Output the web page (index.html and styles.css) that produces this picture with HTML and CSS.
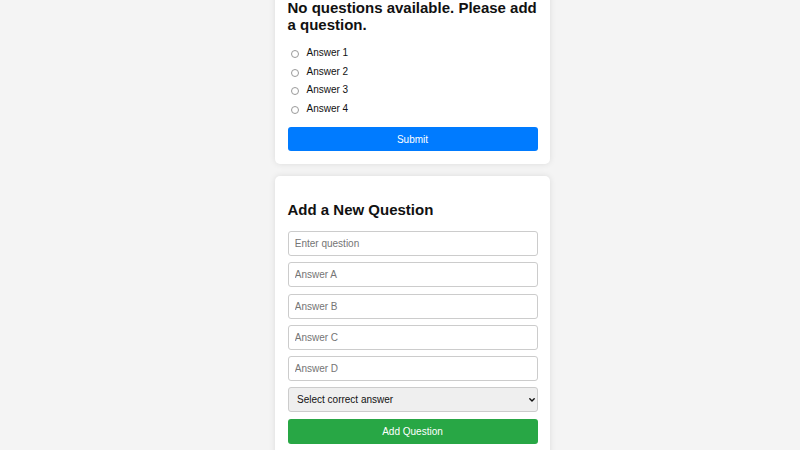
FILE: index.html
```html
<!DOCTYPE html>
<html lang="en">
<head>
<meta charset="utf-8">
<title>Quiz</title>
<link rel="stylesheet" href="styles.css">
</head>
<body>
  <div class="card">
    <h2 class="title">No questions available. Please add a question.</h2>
    <ul class="answers">
      <li class="answer"><input type="radio" name="answer" id="a1" class="radio"><label for="a1">Answer 1</label></li>
      <li class="answer"><input type="radio" name="answer" id="a2" class="radio"><label for="a2">Answer 2</label></li>
      <li class="answer"><input type="radio" name="answer" id="a3" class="radio"><label for="a3">Answer 3</label></li>
      <li class="answer"><input type="radio" name="answer" id="a4" class="radio"><label for="a4">Answer 4</label></li>
    </ul>
    <button class="btn btn-submit">Submit</button>
  </div>
  <div class="card">
    <h2 class="title">Add a New Question</h2>
    <input class="field" type="text" placeholder="Enter question">
    <input class="field" type="text" placeholder="Answer A">
    <input class="field" type="text" placeholder="Answer B">
    <input class="field" type="text" placeholder="Answer C">
    <input class="field" type="text" placeholder="Answer D">
    <div class="select-wrap">
      <select class="field select">
        <option>Select correct answer</option>
        <option>A</option>
        <option>B</option>
        <option>C</option>
        <option>D</option>
      </select>
      <svg class="chevron" width="6" height="4" viewBox="0 0 6 4" aria-hidden="true">
        <path d="M0.8 0.8 L3 3 L5.2 0.8" fill="none" stroke="#111" stroke-width="1.4" stroke-linecap="round" stroke-linejoin="round"/>
      </svg>
    </div>
    <button class="btn btn-add">Add Question</button>
  </div>
</body>
</html>
```
FILE: styles.css
```css
html, body {
  margin: 0;
}
body {
  box-sizing: border-box;
  height: 100vh;
  padding-left: 25px;
  background: #f4f4f4;
  font-family: "Liberation Sans", Arial, sans-serif;
  color: #000;
  display: flex;
  flex-direction: column;
  align-items: center;
  justify-content: center;
}
.card {
  flex-shrink: 0;
  width: 250px;
  padding: 12.5px;
  background: #fff;
  border-radius: 5px;
  box-shadow: 0 0 6px rgba(0, 0, 0, 0.1);
  margin-bottom: 12.5px;
}
.title {
  font-size: 15px;
  line-height: 17.25px;
  font-weight: bold;
  margin: 12.45px 0;
  color: #111;
}
.answers {
  list-style: none;
  margin: 0 0 10.4px;
  padding: 0;
  display: flex;
  flex-direction: column;
  gap: 3.95px;
}
.answer {
  display: flex;
  align-items: center;
  height: 14.8px;
  font-size: 10px;
  line-height: 14.8px;
  color: #111;
}
.radio {
  appearance: none;
  -webkit-appearance: none;
  box-sizing: border-box;
  width: 8px;
  height: 8px;
  margin: 1px 8px 0 3px;
  border: 1px solid #9a9a9a;
  border-radius: 50%;
  background: #fff;
  flex-shrink: 0;
}
.btn {
  display: block;
  width: 100%;
  height: 24.2px;
  border: none;
  border-radius: 3px;
  color: #fff;
  font-family: "Liberation Sans", Arial, sans-serif;
  font-size: 10px;
  padding: 0;
}
.btn-submit {
  background: #007bff;
}
.btn-add {
  background: #28a745;
  margin-bottom: 7.45px;
}
.field {
  display: block;
  box-sizing: border-box;
  width: 100%;
  height: 25px;
  margin: 0 0 6.25px;
  padding: 0 6.25px;
  border: 1px solid #ccc;
  border-radius: 3px;
  font-family: "Liberation Sans", Arial, sans-serif;
  font-size: 10px;
  color: #000;
  background: #fff;
}
.field::placeholder {
  color: #757575;
}
.select-wrap {
  position: relative;
  margin-bottom: 7px;
}
.select {
  appearance: none;
  -webkit-appearance: none;
  background-color: #efefef;
  padding: 0 14px 0 8.5px;
  margin: 0;
  color: #111;
}
.chevron {
  position: absolute;
  right: 2.5px;
  top: 10.5px;
  pointer-events: none;
}
```
